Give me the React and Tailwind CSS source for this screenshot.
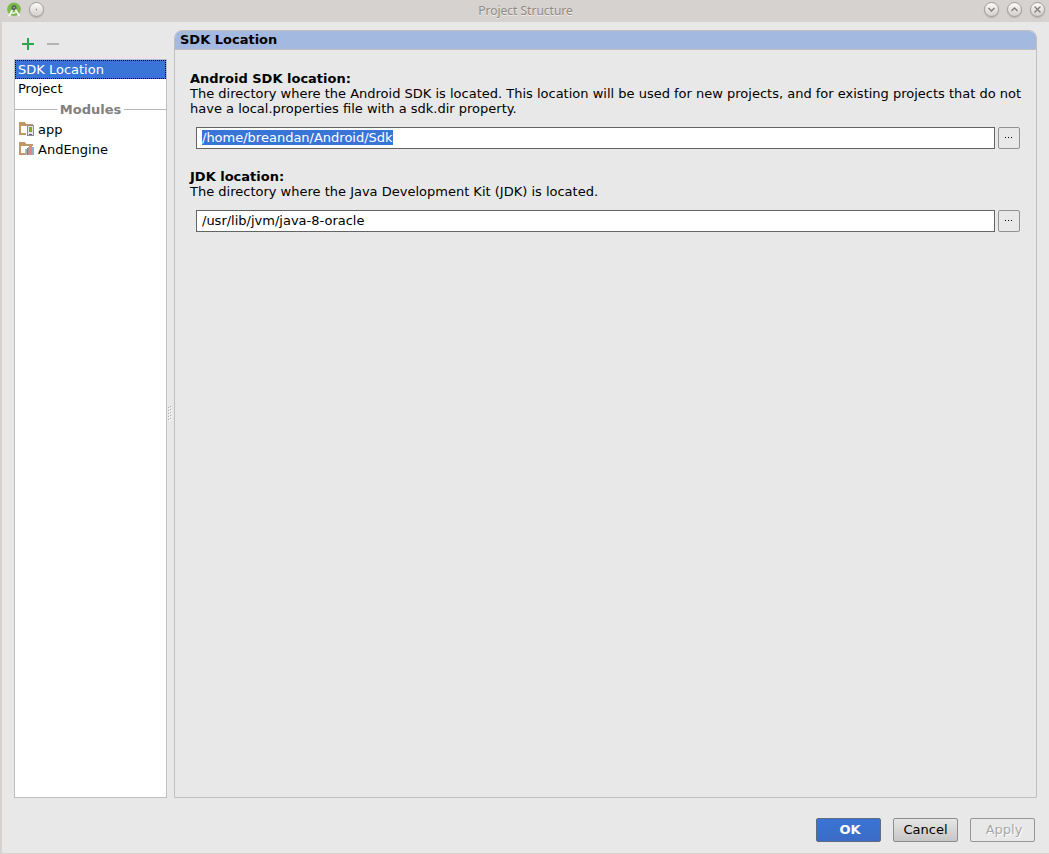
import { useEffect, useRef } from "react";

function AppLogo() {
  return (
    <svg width="16" height="16" viewBox="0 0 16 16" aria-hidden="true">
      <circle cx="8" cy="7.2" r="6.8" fill="#7cba4b" />
      <path d="M5.5 7.5V5.8a2.5 2.8 0 0 1 5 0v1.7L8 8.5z" fill="#58665a" />
      <circle cx="8" cy="5.6" r="0.8" fill="#aebfa6" />
      <path d="M6.4 8L3 14.2M9.4 7.6L13.4 14" fill="none" stroke="#f6f7f2" strokeWidth="1.8" />
      <path d="M5.4 10.8q3.2 1.6 5.4-1.6" fill="none" stroke="#f0f3ea" strokeWidth="1.4" />
    </svg>
  );
}

function TitleButton({ label, children }) {
  return (
    <button
      type="button"
      aria-label={label}
      className="flex size-[15px] items-center justify-center rounded-full border border-[#a09c99] bg-linear-to-b from-[#fbfbfa] to-[#d3d0cd] shadow-[0_1px_1px_#b4b0ac]"
    >
      <svg width="13" height="13" viewBox="0 0 13 13" fill="none" stroke="#807c79" strokeWidth="1.3" className="shrink-0">
        {children}
      </svg>
    </button>
  );
}

function FolderIcon({ kind }) {
  return (
    <svg width="16" height="16" viewBox="0 0 16 16" aria-hidden="true" shapeRendering="crispEdges">
      <path d="M0 1h6l1 2h7v2H2v7h5v2H0z" fill="#c19765" />
      <path d="M2 5h12v7H2z" fill="#fff" />
      {kind === "app" ? (
        <g>
          <path d="M13 3h1v2h-1z" fill="#c19765" />
          <path d="M8 4h7v11H8z" fill="#8d8d8d" />
          <path d="M9 5h5v9H9z" fill="#e4e4e4" />
          <path d="M10 6h3v5h-3z" fill="#83a82b" />
          <path d="M10 13h3v1h-3z" fill="#666" />
        </g>
      ) : (
        <g>
          <path d="M6 8h2v6H6z" fill="#b0b0b0" />
          <path d="M8 7h1v7H8z" fill="#808080" />
          <path d="M9 6h1v8H9z" fill="#9c9c9c" />
          <path d="M10 5h3v9h-3z" fill="#e38480" />
          <path d="M13 6h2v8h-2z" fill="#8fb2cc" />
        </g>
      )}
    </svg>
  );
}

function BrowseButton({ label }) {
  return (
    <button
      type="button"
      aria-label={label}
      className="flex size-[22px] shrink-0 justify-center rounded-xs border border-[#929292] bg-[#e8e8e8] pt-[9px]"
    >
      <svg width="8" height="1" viewBox="0 0 8 1" shapeRendering="crispEdges">
        <path d="M0 0h1v1H0zM3 0h1v1H3zM6 0h1v1H6z" fill="#000" />
      </svg>
    </button>
  );
}

function LocationField({ id, title, description, value, inputRef }) {
  return (
    <section>
      <label htmlFor={id} className="block font-bold">{title}</label>
      <p>{description}</p>
      <div className="mt-[11px] flex gap-[3px] pr-3 pl-[6px]">
        <input
          id={id}
          ref={inputRef}
          type="text"
          spellCheck={false}
          defaultValue={value}
          className="h-[22px] min-w-0 flex-1 border border-[#646464] bg-white px-[5px] pb-[2px] outline-none selection:bg-[#3875d7] selection:text-white"
        />
        <BrowseButton label={"Browse " + title} />
      </div>
    </section>
  );
}

const modules = [
  { name: "app", kind: "app" },
  { name: "AndEngine", kind: "library" },
];

export default function App() {
  const sdkInput = useRef(null);

  useEffect(() => {
    sdkInput.current.focus();
    sdkInput.current.select();
  }, []);

  return (
    <div className="flex min-h-screen flex-col border-b border-l-2 border-[#d6d2d0] bg-[#e8e8e8] font-['DejaVu_Sans',sans-serif] text-[13px] leading-[15px] text-black">
      <header className="flex h-[22px] items-start justify-between bg-[#d6d2cf] px-1 pt-[2px]">
        <div className="flex w-20 gap-[7px]">
          <AppLogo />
          <TitleButton label="Window options">
            <path d="M6 6.5h1" />
          </TitleButton>
        </div>
        <h1 className="pt-px font-['Noto_Sans',sans-serif] text-[12px] leading-[15px] text-[#8f8a86] [text-shadow:0_1px_0_#efedeb]">
          Project Structure
        </h1>
        <div className="flex w-20 justify-end gap-2">
          <TitleButton label="Minimize">
            <path d="M3.5 5l3 3 3-3" />
          </TitleButton>
          <TitleButton label="Maximize">
            <path d="M3.5 8l3-3 3 3" />
          </TitleButton>
          <TitleButton label="Close">
            <path d="M3.5 3.5l6 6M9.5 3.5l-6 6" />
          </TitleButton>
        </div>
      </header>

      <div className="flex flex-1 pt-2 pr-3 pl-3">
        <aside className="flex w-[153px] shrink-0 flex-col">
          <div className="flex h-[29px] gap-[13px] pt-2 pl-2">
            <button type="button" aria-label="Add" className="size-3">
              <svg width="12" height="12" viewBox="0 0 12 12" shapeRendering="crispEdges">
                <path d="M5 0h2v5h5v2H7v5H5V7H0V5h5z" fill="#2fa34f" />
              </svg>
            </button>
            <button type="button" aria-label="Remove" className="size-3">
              <svg width="12" height="12" viewBox="0 0 12 12" shapeRendering="crispEdges">
                <path d="M0 5h12v2H0z" fill="#b4b4b4" />
              </svg>
            </button>
          </div>
          <nav className="flex-1 border border-[#bfbfbf] bg-white">
            <a href="#sdk" className="block h-[19px] border border-dotted border-black bg-[#3875d7] px-[2px] pt-px text-white">
              SDK Location
            </a>
            <a href="#project" className="block h-5 px-[3px] pt-[2px]">Project</a>
            <div className="flex h-5 items-center gap-[3px] font-bold text-[#808080]">
              <span className="h-px flex-1 bg-[#b4b4b4]" />
              Modules
              <span className="h-px flex-1 bg-[#b4b4b4]" />
            </div>
            {modules.map((module) => (
              <a key={module.name} href={"#" + module.name} className="flex h-5 items-center gap-[3px] pl-1">
                <FolderIcon kind={module.kind} />
                {module.name}
              </a>
            ))}
          </nav>
        </aside>

        <div className="flex w-[7px] shrink-0 items-center">
          <svg width="5" height="16" viewBox="0 0 5 16" shapeRendering="crispEdges" aria-hidden="true">
            <path d="M3 0h1v1H3zM1 1h1v1H1zM3 3h1v1H3zM1 4h1v1H1zM3 6h1v1H3zM1 7h1v1H1zM3 9h1v1H3zM1 10h1v1H1zM3 12h1v1H3zM1 13h1v1H1z" fill="#adadad" />
            <path d="M4 1h1v1H4zM2 2h1v1H2zM4 4h1v1H4zM2 5h1v1H2zM4 7h1v1H4zM2 8h1v1H2zM4 10h1v1H4zM2 11h1v1H2zM4 13h1v1H4zM2 14h1v1H2z" fill="#fff" />
          </svg>
        </div>

        <main className="min-w-0 flex-1 rounded-t-lg border border-[#bfbfbf]">
          <h2 className="h-[19px] rounded-t-[7px] border-b border-[#bfbfbf] bg-[#a3b9e0] px-[5px] pt-px font-bold">
            SDK Location
          </h2>
          <div className="flex flex-col gap-5 pt-[21px] pr-1 pl-[15px]">
            <LocationField
              id="sdk-location"
              title="Android SDK location:"
              description="The directory where the Android SDK is located. This location will be used for new projects, and for existing projects that do not have a local.properties file with a sdk.dir property."
              value="/home/breandan/Android/Sdk"
              inputRef={sdkInput}
            />
            <LocationField
              id="jdk-location"
              title="JDK location:"
              description="The directory where the Java Development Kit (JDK) is located."
              value="/usr/lib/jvm/java-8-oracle"
            />
          </div>
        </main>
      </div>

      <footer className="flex justify-end gap-3 pt-5 pr-[14px] pb-[11px]">
        <button type="button" className="h-6 w-[65px] rounded-xs border border-[#5f6b80] bg-linear-to-b from-[#3a74d4] to-[#3b6bc6] pb-[2px] pl-[3px] font-bold text-white">
          OK
        </button>
        <button type="button" className="h-6 w-[65px] rounded-xs border border-[#8c8c8c] bg-linear-to-b from-[#e6e6e6] to-[#c6c6c6] pb-[2px]">
          Cancel
        </button>
        <button type="button" disabled className="h-6 w-[65px] rounded-xs border border-[#969696] bg-[#e8e8e8] pb-[2px] pl-[3px] text-[#a8a8a8] [text-shadow:1px_1px_0_#fff]">
          Apply
        </button>
      </footer>
    </div>
  );
}
